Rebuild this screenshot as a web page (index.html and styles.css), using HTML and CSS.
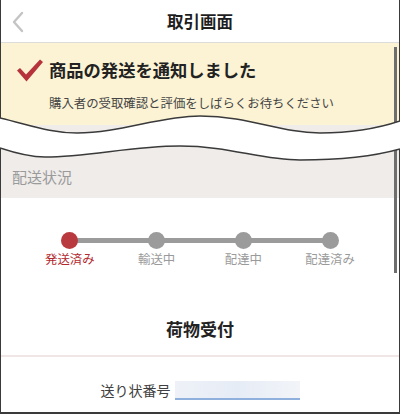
FILE: index.html
```html
<!DOCTYPE html>
<html lang="ja">
<head>
<meta charset="utf-8">
<title>取引画面</title>
<link rel="stylesheet" href="styles.css">
</head>
<body>
<div class="frame">
  <div class="piece piece-top">
    <header class="header">
      <svg class="back" width="14" height="22" viewBox="0 0 14 22"><polyline points="11,2 3,11 11,20" fill="none" stroke="#c4c4c4" stroke-width="2.4" stroke-linecap="round" stroke-linejoin="round"/></svg>
      <h1 class="header-title">取引画面</h1>
    </header>
    <section class="banner">
      <div class="banner-row">
        <svg class="check" width="28" height="24" viewBox="0 0 28 24"><path d="M1,11.5 L4,9 L10,15.5 L24,0.5 L27,3 L10.5,22.5 Z" fill="#b6333b"/></svg>
        <span class="banner-title">商品の発送を通知しました</span>
      </div>
      <p class="banner-sub">購入者の受取確認と評価をしばらくお待ちください</p>
      <div class="scrollbar scrollbar-top"></div>
    </section>
  </div>
  <svg class="tear" width="400" height="54" viewBox="0 0 400 54">
    <defs>
      <clipPath id="topClip"><path d="M0,0 H400 V9 C385,14 360,21 320,21 C280,21 250,4 200,4 C160,4 120,21 77,21 C50,21 30,13 0,6 Z"/></clipPath>
      <clipPath id="botClip"><path d="M0,36 C15,41 30,45 45,45 C90,45 130,34 180,34 C230,34 260,48 300,48 C340,48 375,44 400,37 V54 H0 Z"/></clipPath>
    </defs>
    <rect x="0" y="0" width="400" height="54" fill="#ffffff"/>
    <g clip-path="url(#topClip)">
      <rect x="0" y="0" width="400" height="13" fill="#fbf3d4"/>
      <rect x="0" y="13" width="400" height="20" fill="#efecea"/>
      <rect x="394" y="0" width="3" height="13" fill="#6e6e6e"/>
    </g>
    <g clip-path="url(#botClip)">
      <rect x="0" y="30" width="400" height="24" fill="#efecea"/>
      <rect x="394" y="30" width="3" height="24" fill="#6e6e6e"/>
    </g>
    <path d="M0,6 C30,13 50,21 77,21 C120,21 160,4 200,4 C250,4 280,21 320,21 C360,21 385,14 400,9" fill="none" stroke="#3a3a3a" stroke-width="1.5"/>
    <path d="M0,36 C15,41 30,45 45,45 C90,45 130,34 180,34 C230,34 260,48 300,48 C340,48 375,44 400,37" fill="none" stroke="#3a3a3a" stroke-width="1.5"/>
    <line x1="0.5" y1="0" x2="0.5" y2="6" stroke="#3a3a3a" stroke-width="1"/>
    <line x1="399.5" y1="0" x2="399.5" y2="9" stroke="#3a3a3a" stroke-width="1"/>
    <line x1="0.5" y1="36" x2="0.5" y2="54" stroke="#3a3a3a" stroke-width="1"/>
    <line x1="399.5" y1="37" x2="399.5" y2="54" stroke="#3a3a3a" stroke-width="1"/>
  </svg>
  <div class="piece piece-bottom">
    <div class="status-head">配送状況</div>
    <section class="progress">
      <div class="track">
        <div class="track-line"></div>
        <div class="step step-done"><span class="dot"></span><span class="label">発送済み</span></div>
        <div class="step"><span class="dot"></span><span class="label">輸送中</span></div>
        <div class="step"><span class="dot"></span><span class="label">配達中</span></div>
        <div class="step"><span class="dot"></span><span class="label">配達済み</span></div>
      </div>
    </section>
    <h2 class="section-title">荷物受付</h2>
    <div class="divider"></div>
    <div class="tracking-row">
      <span class="tracking-label">送り状番号</span>
      <span class="tracking-value"></span>
    </div>
    <div class="scrollbar scrollbar-bottom"></div>
  </div>
</div>
</body>
</html>
```
FILE: styles.css
```css
* { box-sizing: border-box; }
html, body {
  margin: 0;
  padding: 0;
  background: #ffffff;
}
body {
  font-family: "Noto Sans CJK JP", "Noto Sans", sans-serif;
  color: #222;
}
.frame {
  width: 400px;
  height: 414px;
  overflow: hidden;
  display: flex;
  flex-direction: column;
}
.piece {
  border-left: 1px solid #3a3a3a;
  border-right: 1px solid #3a3a3a;
  position: relative;
}
.header {
  height: 43px;
  border-bottom: 1px solid #dcdcdc;
  background: #fff;
  display: flex;
  align-items: center;
  justify-content: center;
  position: relative;
}
.back {
  position: absolute;
  left: 10px;
  top: 11px;
}
.header-title {
  margin: 0;
  font-size: 16.5px;
  font-weight: bold;
  line-height: 24px;
  color: #1e1e1e;
}
.banner {
  background: #fbf3d4;
  height: 69px;
  padding: 15px 0 0 15px;
  position: relative;
}
.banner-row {
  display: flex;
  align-items: center;
  gap: 5px;
  height: 24px;
}
.check { margin-top: 2px; }
.banner-title {
  font-size: 17.3px;
  font-weight: bold;
  line-height: 24px;
  color: #222;
}
.banner-sub {
  margin: 12px 0 0 33px;
  font-size: 12.4px;
  line-height: 18px;
  color: #454545;
}
.scrollbar {
  position: absolute;
  right: 2px;
  width: 3px;
  background: #6e6e6e;
}
.scrollbar-top { top: 4px; bottom: 0; }
.scrollbar-bottom { top: 0; height: 107px; }
.tear { display: block; flex: none; }
.piece-bottom {
  flex: 1;
  border-bottom: 2px solid #3a3a3a;
}
.status-head {
  background: #efecea;
  height: 32px;
  padding: 0 0 0 11px;
  font-size: 15px;
  line-height: 22px;
  color: #9a9a9a;
}
.progress {
  padding-top: 34px;
}
.track {
  position: relative;
  width: 347px;
  margin: 0 auto;
  display: grid;
  grid-template-columns: repeat(4, 1fr);
}
.track-line {
  position: absolute;
  left: 43px;
  right: 43px;
  top: 6px;
  height: 5px;
  background: #9b9b9b;
}
.step {
  display: flex;
  flex-direction: column;
  align-items: center;
  gap: 2px;
  position: relative;
}
.dot {
  width: 17px;
  height: 17px;
  border-radius: 50%;
  background: #9b9b9b;
}
.label {
  font-size: 12.4px;
  line-height: 16px;
  color: #9a9a9a;
}
.step-done .dot { background: #b93a3e; }
.step-done .label { color: #b3282e; }
.section-title {
  margin: 50px 0 0;
  text-align: center;
  font-size: 17px;
  font-weight: bold;
  line-height: 24px;
  color: #222;
}
.divider {
  margin-top: 14px;
  height: 2px;
  background: #f0e6e6;
}
.tracking-row {
  display: flex;
  justify-content: center;
  align-items: center;
  gap: 4px;
  margin-top: 23px;
}
.tracking-label {
  font-size: 14px;
  line-height: 20px;
  color: #404040;
}
.tracking-value {
  width: 125px;
  height: 19px;
  background: linear-gradient(90deg, #eef1f7, #e6ecf6 50%, #f2f4f8);
  border-bottom: 2px solid #8fb0dc;
}
```
